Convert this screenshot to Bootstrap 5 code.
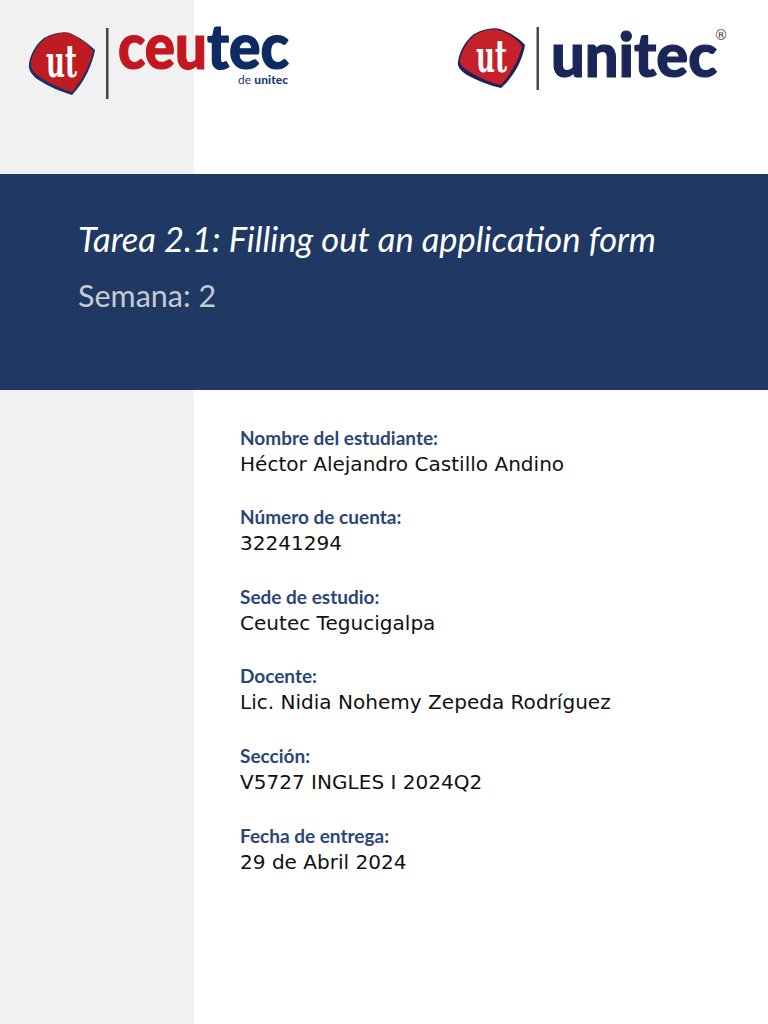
<!DOCTYPE html>
<html lang="es">
<head>
<meta charset="utf-8">
<title>Tarea 2.1</title>
<link href="https://cdn.jsdelivr.net/npm/bootstrap@5.3.0/dist/css/bootstrap.min.css" rel="stylesheet">
<style>
html,body{margin:0;height:1024px;overflow:hidden}
.sheet{height:1024px;background:linear-gradient(to right,#f1f1f1 194px,#fff 194px)}
.logos{height:174px;padding:0 38px 0 20px}
.logos svg{display:block}
.logo-text{font-family:"Lato",sans-serif;font-weight:900;stroke-width:1.2;paint-order:stroke}
.mono{font-family:"DejaVu Serif",serif;font-weight:700;fill:#fff}
.band{height:216px;background:#1f3864;padding:45px 0 0 78px;font-family:"Lato",sans-serif}
.band-title{font-size:34.5px;line-height:40px;font-style:italic;font-weight:400;color:#fff;margin:0 0 18px}
.band-sub{font-size:30.5px;line-height:36px;color:#c6cad2;margin:0}
.details{padding:34.6px 0 0 240px}
.entry{height:79.6px;margin:0}
.entry dt{font-family:"Lato",sans-serif;font-weight:700;font-size:19px;line-height:26px;color:#2b4676;margin:0}
.entry dd{font-family:"DejaVu Sans",sans-serif;font-size:20.06px;line-height:27px;color:#111;margin:0}
</style>
</head>
<body>
<div class="sheet">
  <header class="logos d-flex justify-content-between align-items-start">
    <svg width="280" height="110" viewBox="20 0 280 110" role="img" aria-label="ceutec de unitec">
      <path d="M29 64C30 54 37 43 44 38C53 33 63 31 70 33C79 37 89 44 95 50C93 62 85 82 72 95C62 92 49 87 37 79C32 75 28 70 29 64Z" fill="#1b2f68"/>
      <path d="M31 62C33 52 39 43 46 38C54 34 62 32 69 33C78 37 88 44 93 51C91 62 84 78 72 92C62 89 50 84 40 77C34 73 30 68 31 62Z" fill="#c11b22"/>
      <text class="mono" x="46" y="77" font-size="44" textLength="31" lengthAdjust="spacingAndGlyphs">ut</text>
      <rect x="106" y="28" width="2.5" height="71" fill="#45464a"/>
      <text class="logo-text" x="118" y="69" font-size="62" textLength="89" lengthAdjust="spacingAndGlyphs" fill="#c4161f" stroke="#c4161f">ceu</text>
      <text class="logo-text" x="207" y="69" font-size="62" textLength="82" lengthAdjust="spacingAndGlyphs" fill="#0e2a63" stroke="#0e2a63">tec</text>
      <text x="238" y="84" font-family="Lato,sans-serif" font-size="12" textLength="50" fill="#1e3a75">de <tspan font-weight="900">unitec</tspan></text>
    </svg>
    <svg width="280" height="100" viewBox="450 0 280 100" role="img" aria-label="unitec">
      <path d="M458 62C459 52 466 40 474 34C483 29 493 27 500 29C509 32 519 38 525 45C523 58 515 76 501 88C491 86 478 81 467 75C461 71 457 67 458 62Z" fill="#1b2459"/>
      <path d="M460 60C462 50 468 40 475 35C483 30 492 28 499 30C508 33 517 39 522 46C520 57 513 71 501 85C491 83 480 78 470 72C464 68 459 65 460 60Z" fill="#c8202a"/>
      <text class="mono" x="476" y="72" font-size="44" textLength="31" lengthAdjust="spacingAndGlyphs">ut</text>
      <rect x="536.5" y="27" width="2.5" height="63" fill="#48494d"/>
      <text class="logo-text" x="551" y="77" font-size="60" textLength="166" lengthAdjust="spacingAndGlyphs" fill="#1a2657" stroke="#1a2657">unitec</text>
      <text x="714" y="40" font-family="DejaVu Sans,sans-serif" font-size="14" fill="#444">®</text>
    </svg>
  </header>
  <section class="band">
    <h1 class="band-title">Tarea 2.1: Filling out an application form</h1>
    <p class="band-sub">Semana: 2</p>
  </section>
  <dl class="details m-0">
    <div class="entry"><dt>Nombre del estudiante:</dt><dd>Héctor Alejandro Castillo Andino</dd></div>
    <div class="entry"><dt>Número de cuenta:</dt><dd>32241294</dd></div>
    <div class="entry"><dt>Sede de estudio:</dt><dd>Ceutec Tegucigalpa</dd></div>
    <div class="entry"><dt>Docente:</dt><dd>Lic. Nidia Nohemy Zepeda Rodríguez</dd></div>
    <div class="entry"><dt>Sección:</dt><dd>V5727 INGLES I 2024Q2</dd></div>
    <div class="entry"><dt>Fecha de entrega:</dt><dd>29 de Abril 2024</dd></div>
  </dl>
</div>
</body>
</html>
